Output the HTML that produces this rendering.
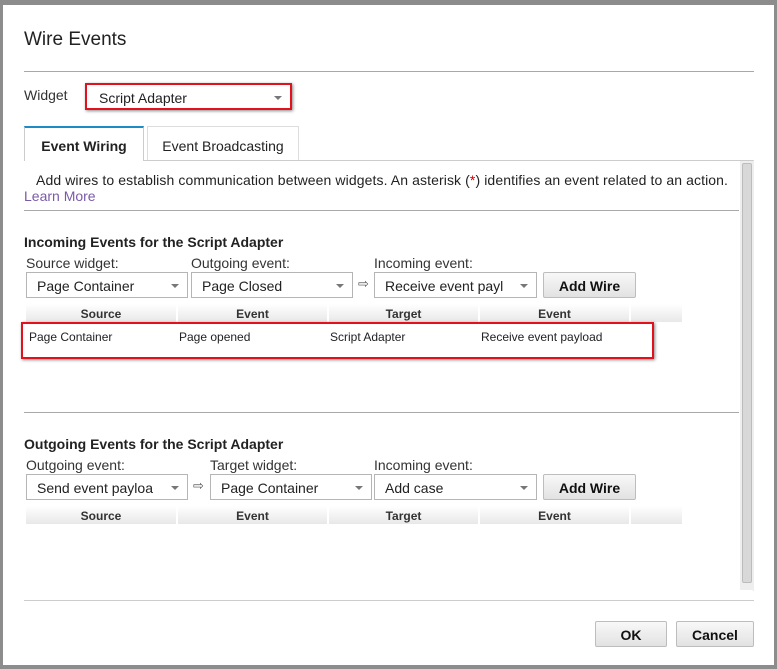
<!DOCTYPE html>
<html><head><style>
*{box-sizing:border-box;margin:0;padding:0}
body{width:777px;height:669px;background:#8c8c8c;font-family:"Liberation Sans",Arial,sans-serif;color:#222;position:relative;overflow:hidden}
.dlg{position:absolute;left:3px;top:5px;width:771px;height:660px;background:#fff}
.a{position:absolute}
.sel{position:absolute;height:26px;border:1px solid #b5b5b5;background:#fff;font-size:14px;padding:5px 0 0 10px;white-space:nowrap;overflow:hidden}
.sel:after{content:"";position:absolute;right:8px;top:11px;border-left:4px solid transparent;border-right:4px solid transparent;border-top:4px solid #777}
.btn{position:absolute;border:1px solid #bdbdbd;border-radius:2px;background:linear-gradient(#f8f8f8,#e2e2e2);font-weight:bold;font-size:14px;text-align:center;color:#111}
.th{position:absolute;height:18px;background:linear-gradient(#fff,#e8e8e8);font-size:12px;font-weight:bold;text-align:center;padding-top:3px;color:#333}
.td{position:absolute;font-size:12px;color:#222}
.lbl{position:absolute;font-size:14px;color:#333}
.hr{position:absolute;height:1px;background:#a8a8a8}
.arrow{position:absolute;font-size:13px;color:#555}
</style></head><body>
<div class="dlg"></div>
<div class="a" style="left:24px;top:29px;font-size:19px;color:#222">Wire Events</div>
<div class="hr" style="left:24px;top:71px;width:730px"></div>
<div class="lbl" style="left:24px;top:87px;">Widget</div>
<div class="sel" style="left:85px;top:83px;width:207px;height:27px;border:2px solid #e3111b;box-shadow:1px 1px 3px #888;padding:5px 0 0 12px">Script Adapter</div>
<div class="a" style="left:24px;top:126px;width:120px;height:35px;border:1px solid #ccc;border-top:2px solid #1e8ac6;border-bottom:none;background:#fff;font-weight:bold;font-size:14px;text-align:center;padding-top:10px;z-index:2">Event Wiring</div>
<div class="a" style="left:147px;top:126px;width:152px;height:34px;border:1px solid #ddd;border-bottom:none;font-size:14px;text-align:center;padding-top:11px">Event Broadcasting</div>
<div class="a" style="left:24px;top:160px;width:730px;height:431px;border-top:1px solid #ccc;border-right:1px solid #e5e5e5"></div>
<div class="a" style="left:740px;top:161px;width:14px;height:429px;background:#eee"></div>
<div class="a" style="left:742px;top:163px;width:10px;height:420px;background:#d8d8d8;border:1px solid #bcbcbc;border-radius:2px"></div>
<div class="a" style="left:36px;top:172px;font-size:14px;color:#222;letter-spacing:0.1px">Add wires to establish communication between widgets. An asterisk (<span style="color:#c00">*</span>) identifies an event related to an action.</div>
<div class="a" style="left:24px;top:188px;font-size:14px;color:#7a5aa8">Learn More</div>
<div class="hr" style="left:24px;top:210px;width:715px"></div>
<div class="a" style="left:24px;top:234px;font-size:14px;font-weight:bold">Incoming Events for the Script Adapter</div>
<div class="lbl" style="left:26px;top:255px">Source widget:</div>
<div class="lbl" style="left:191px;top:255px">Outgoing event:</div>
<div class="lbl" style="left:374px;top:255px">Incoming event:</div>
<div class="sel" style="left:26px;top:272px;width:162px">Page Container</div>
<div class="sel" style="left:191px;top:272px;width:162px">Page Closed</div>
<div class="arrow" style="left:358px;top:276px">⇨</div>
<div class="sel" style="left:374px;top:272px;width:163px">Receive event payl&nbsp;&nbsp;&nbsp;&nbsp;</div>
<div class="btn" style="left:543px;top:272px;width:93px;height:26px;padding-top:5px">Add Wire</div>
<div class="th" style="left:26px;top:304px;width:150px">Source</div>
<div class="th" style="left:178px;top:304px;width:149px">Event</div>
<div class="th" style="left:329px;top:304px;width:149px">Target</div>
<div class="th" style="left:480px;top:304px;width:149px">Event</div>
<div class="th" style="left:631px;top:304px;width:51px"></div>
<div class="a" style="left:21px;top:322px;width:633px;height:37px;border:2px solid #e3111b;box-shadow:1px 1px 3px #888"></div>
<div class="td" style="left:29px;top:330px">Page Container</div>
<div class="td" style="left:179px;top:330px">Page opened</div>
<div class="td" style="left:330px;top:330px">Script Adapter</div>
<div class="td" style="left:481px;top:330px">Receive event payload</div>
<div class="hr" style="left:24px;top:412px;width:715px"></div>
<div class="a" style="left:24px;top:436px;font-size:14px;font-weight:bold">Outgoing Events for the Script Adapter</div>
<div class="lbl" style="left:26px;top:457px">Outgoing event:</div>
<div class="lbl" style="left:210px;top:457px">Target widget:</div>
<div class="lbl" style="left:374px;top:457px">Incoming event:</div>
<div class="sel" style="left:26px;top:474px;width:162px">Send event payloa&nbsp;&nbsp;&nbsp;&nbsp;</div>
<div class="arrow" style="left:193px;top:478px">⇨</div>
<div class="sel" style="left:210px;top:474px;width:162px">Page Container</div>
<div class="sel" style="left:374px;top:474px;width:163px">Add case</div>
<div class="btn" style="left:543px;top:474px;width:93px;height:26px;padding-top:5px">Add Wire</div>
<div class="th" style="left:26px;top:506px;width:150px">Source</div>
<div class="th" style="left:178px;top:506px;width:149px">Event</div>
<div class="th" style="left:329px;top:506px;width:149px">Target</div>
<div class="th" style="left:480px;top:506px;width:149px">Event</div>
<div class="th" style="left:631px;top:506px;width:51px"></div>
<div class="hr" style="left:24px;top:600px;width:730px;background:#ccc"></div>
<div class="btn" style="left:595px;top:621px;width:72px;height:26px;padding-top:5px">OK</div>
<div class="btn" style="left:676px;top:621px;width:78px;height:26px;padding-top:5px">Cancel</div>
</body></html>
